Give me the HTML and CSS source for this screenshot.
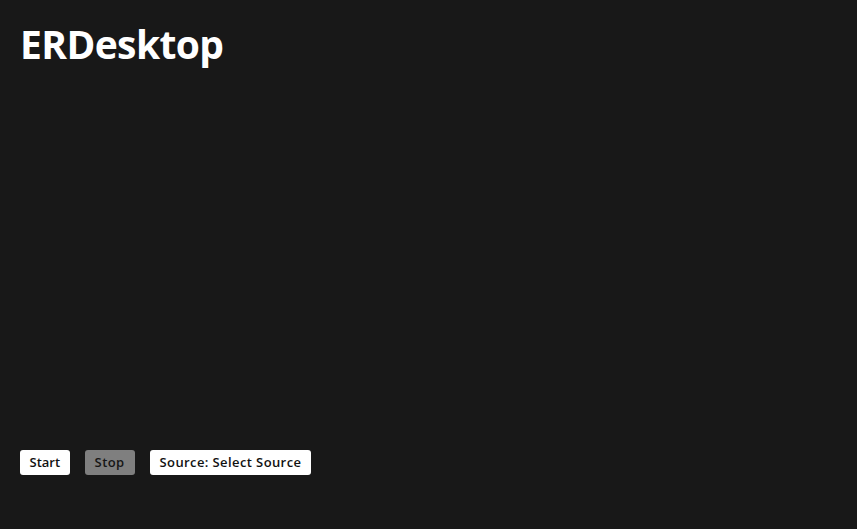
FILE: index.html
```html
<!DOCTYPE html>
<html lang="en">
<head>
<meta charset="utf-8">
<title>ERDesktop</title>
<link rel="stylesheet" href="styles.css">
</head>
<body>
<main class="app">
  <h1 class="title">ERDesktop</h1>
  <div class="video"></div>
  <div class="controls">
    <button class="btn btn-tight">Start</button>
    <button class="btn btn-disabled" disabled>Stop</button>
    <button class="btn">Source: Select Source</button>
  </div>
</main>
</body>
</html>
```
FILE: styles.css
```css
html, body {
  margin: 0;
  padding: 0;
  background: #181818;
  height: 100%;
}
.app {
  padding: 0 20px;
  font-family: "Open Sans", "Noto Sans", sans-serif;
  color: #ffffff;
}
.title {
  margin: 0;
  padding-top: 20px;
  font-size: 39px;
  line-height: 48px;
  font-weight: 700;
  letter-spacing: -0.6px;
}
.video {
  height: 382px;
}
.controls {
  display: flex;
  gap: 15px;
}
.btn {
  height: 25px;
  padding: 0 10px;
  border: none;
  border-radius: 3px;
  background: #ffffff;
  color: #111111;
  font-family: "Open Sans", "Noto Sans", sans-serif;
  font-size: 13px;
  font-weight: 600;
  letter-spacing: 0.4px;
  line-height: 25px;
}
.btn-tight {
  padding: 0 9.5px;
  letter-spacing: 0;
}
.btn-disabled {
  background: #7f7f7f;
  color: #161616;
}
```
